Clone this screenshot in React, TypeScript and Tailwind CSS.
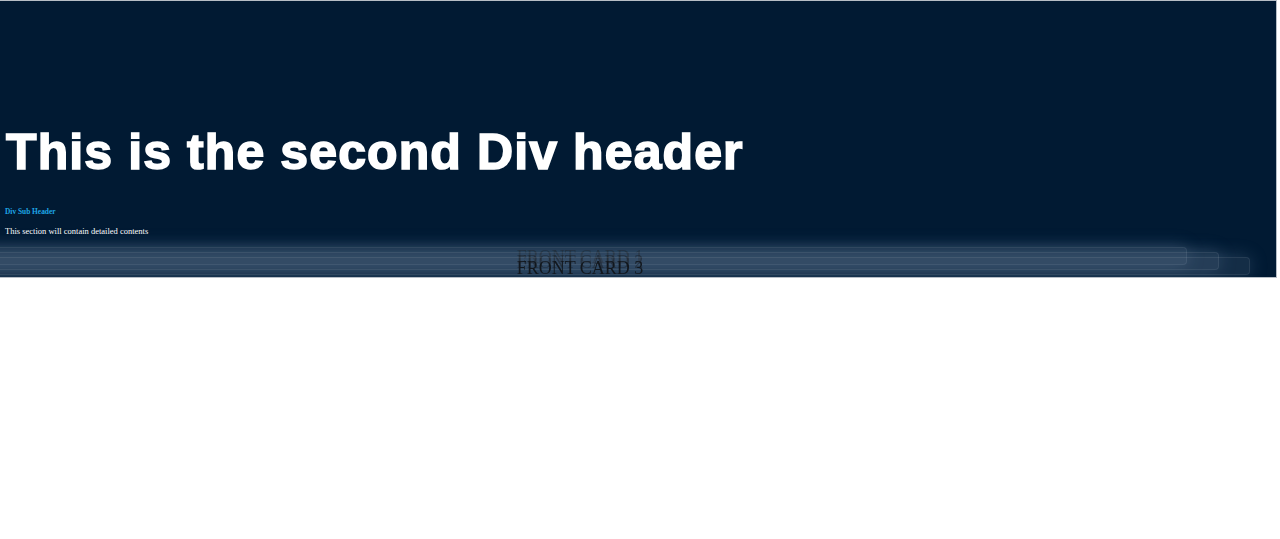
export default function App() {
  const cards = [
    { label: "FRONT CARD 1", cls: "top-0 left-[-27px] right-[89px]" },
    { label: "FRONT CARD 2", cls: "top-[5px] left-[-59px] right-[57px]" },
    { label: "FRONT CARD 3", cls: "top-[10px] left-[-90px] right-[26px]" },
  ];

  return (
    <div className="min-h-[539px] bg-white">
      <section className="w-[1277px] bg-[#011a33] border-t border-r border-b border-[#b7bec6] pt-[123px] overflow-hidden">
        <h1 className="pl-[6px] text-[50px] leading-[56px] tracking-[1.1px] font-bold text-white font-['Liberation_Sans',Arial,sans-serif] [-webkit-text-stroke:1.6px_white]">
          This is the second Div header
        </h1>
        <h3 className="mt-[26px] pl-[5px] text-[7.4px] leading-[12px] font-bold text-[#1ea6e6] font-['Liberation_Serif','Times_New_Roman',serif]">
          Div Sub Header
        </h3>
        <p className="mt-[7px] pl-[5px] text-[8.5px] leading-[12px] text-white font-['Liberation_Serif','Times_New_Roman',serif]">
          This section will contain detailed contents
        </p>
        <div className="relative mt-[10px] h-[30px]">
          {cards.map((c, i) => (
            <div
              key={c.label}
              className={`absolute ${c.cls} h-[18px] rounded-[4px] bg-[#8fa6bd]/[0.14] border border-white/[0.08] shadow-[0_0_18px_rgba(120,150,180,0.3)]`}
            >
              <div
                className={`text-center text-[18px] leading-[18px] font-['Liberation_Serif','Times_New_Roman',serif] ${
                  i === 2 ? "text-[#12171d] blur-[0.4px] mt-[1px]" : "text-[#0b0f14]/60 blur-[0.7px]"
                }`}
              >
                {c.label}
              </div>
            </div>
          ))}
        </div>
      </section>
    </div>
  );
}
